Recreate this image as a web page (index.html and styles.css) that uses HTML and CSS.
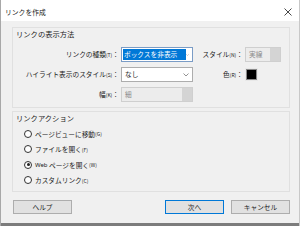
FILE: index.html
```html
<!DOCTYPE html>
<html lang="ja">
<head>
<meta charset="utf-8">
<title>リンクを作成</title>
<link rel="stylesheet" href="styles.css">
</head>
<body>
<div class="window">
  <div class="titlebar">
    <span class="title">リンクを作成</span>
    <svg class="close" width="8" height="8" viewBox="0 0 8 8"><path d="M0.5 0.5L7.5 7.5M7.5 0.5L0.5 7.5" stroke="#333" stroke-width="0.9" fill="none"/></svg>
  </div>
  <div class="body">
    <div class="group g1">
      <div class="glabel">リンクの表示方法</div>
      <div class="grid">
        <div class="lbl">リンクの種類<small>(T)</small>：</div>
        <div class="sel focus"><span class="hl">ボックスを非表示</span><svg class="arr" width="6" height="4" viewBox="0 0 6 4"><path d="M0.5 0.5L3 3L5.5 0.5" stroke="#777" stroke-width="0.8" fill="none"/></svg></div>
        <div class="lbl">スタイル<small>(N)</small>：</div>
        <div class="sel dis short"><span>実線</span><i class="dbtn"></i></div>

        <div class="lbl">ハイライト表示のスタイル<small>(S)</small>：</div>
        <div class="sel"><span>なし</span><svg class="arr" width="6" height="4" viewBox="0 0 6 4"><path d="M0.5 0.5L3 3L5.5 0.5" stroke="#777" stroke-width="0.8" fill="none"/></svg></div>
        <div class="lbl">色<small>(R)</small>：</div>
        <div class="swatch"></div>

        <div class="lbl">幅<small>(K)</small>：</div>
        <div class="sel dis"><span>細</span><i class="dbtn"></i></div>
      </div>
    </div>
    <div class="group g2">
      <div class="glabel">リンクアクション</div>
      <div class="radios">
        <div class="radio"><i class="dot"></i>ページビューに移動<small>(G)</small></div>
        <div class="radio"><i class="dot"></i>ファイルを開く<small>(F)</small></div>
        <div class="radio"><i class="dot on"></i><span class="lat">Web</span>&nbsp;ページを開く<small>(W)</small></div>
        <div class="radio"><i class="dot"></i>カスタムリンク<small>(C)</small></div>
      </div>
    </div>
    <div class="buttons">
      <div class="btn">ヘルプ</div>
      <div class="spacer"></div>
      <div class="btn def">次へ</div>
      <div class="btn">キャンセル</div>
    </div>
  </div>
  <div class="bottom"></div>
</div>
</body>
</html>
```
FILE: styles.css
```css
html, body {
  margin: 0;
  padding: 0;
  width: 300px;
  height: 226px;
  overflow: hidden;
  background: #f0f0f0;
}
body {
  font-family: "Noto Sans CJK JP", "Noto Sans", sans-serif;
  font-size: 6.7px;
  color: #1a1a1a;
}
.window {
  width: 300px;
  height: 226px;
  display: flex;
  flex-direction: column;
  box-sizing: border-box;
  border-left: 1px solid #a8a8a8;
  border-right: 1px solid #c8c8c8;
}
.titlebar {
  height: 21px;
  background: #fff;
  display: flex;
  align-items: center;
  padding: 0 6px 0 4px;
  flex: none;
}
.title {
  font-size: 6.8px;
  flex: 1;
  padding-top: 2px;
}
.close {
  margin-right: 1px;
  margin-top: 2px;
}
.body {
  flex: 1;
  display: flex;
  flex-direction: column;
  padding: 6px 9px 0 11px;
  background: #f0f0f0;
}
.group {
  border: 1px solid #e0e0e0;
  box-sizing: border-box;
  padding: 1px 0 0 3px;
}
.g1 { height: 81px; }
.g2 { height: 81px; margin-top: 3px; }
.glabel {
  font-size: 7.3px;
  line-height: 10px;
  height: 10px;
}
.grid {
  margin-top: 8px;
  display: grid;
  grid-template-columns: 103px 72px 48px auto;
  grid-auto-rows: 15px;
  row-gap: 5px;
  column-gap: 2px;
  align-items: center;
}
.lbl {
  text-align: right;
  white-space: nowrap;
  line-height: 15px;
}
small {
  font-size: 5px;
}
.sel {
  height: 15px;
  box-sizing: border-box;
  border: 1px solid #adadad;
  background: #fff;
  display: flex;
  align-items: center;
  padding-left: 1px;
}
.sel span {
  flex: 1;
  padding-left: 2px;
  line-height: 11px;
}
.sel .arr {
  margin-right: 3px;
}
.sel.focus {
  border-color: #7a9cc6;
}
.sel.focus span.hl {
  flex: none;
  width: 62px;
  background: #0078d7;
  color: #fff;
  padding-left: 1px;
  margin-right: auto;
}
.sel.dis {
  background: #ececec;
  border-color: #cfcfcf;
  color: #8a8a8a;
}
.sel.short {
  width: 36px;
}
.dbtn {
  width: 10px;
  height: 13px;
  background: #d4d4d4;
  flex: none;
}
.swatch {
  width: 9px;
  height: 9px;
  border: 1px solid #888;
  background: #000;
  margin-left: 1px;
  outline: 1px solid #e8e8e8;
}
.radios {
  margin-top: 3px;
  padding-left: 8px;
  display: flex;
  flex-direction: column;
}
.radio {
  height: 15.5px;
  display: flex;
  align-items: center;
  white-space: nowrap;
}
.lat {
  font-family: "Noto Sans", sans-serif;
  font-size: 6px;
}
.dot {
  width: 6px;
  height: 6px;
  border: 1px solid #333;
  border-radius: 50%;
  background: #fff;
  margin-right: 3px;
  position: relative;
  flex: none;
}
.dot.on::after {
  content: "";
  position: absolute;
  left: 1.5px;
  top: 1.5px;
  width: 3px;
  height: 3px;
  border-radius: 50%;
  background: #222;
}
.buttons {
  display: flex;
  margin-top: 8px;
  gap: 7px;
  padding-left: 1px;
}
.spacer { flex: 1; }
.btn {
  width: 59px;
  height: 14px;
  box-sizing: border-box;
  border: 1px solid #adadad;
  background: #e1e1e1;
  text-align: center;
  line-height: 12px;
}
.btn.def {
  border-color: #0078d7;
}
.bottom {
  height: 3px;
  background: #7c7c7c;
  flex: none;
}
```
